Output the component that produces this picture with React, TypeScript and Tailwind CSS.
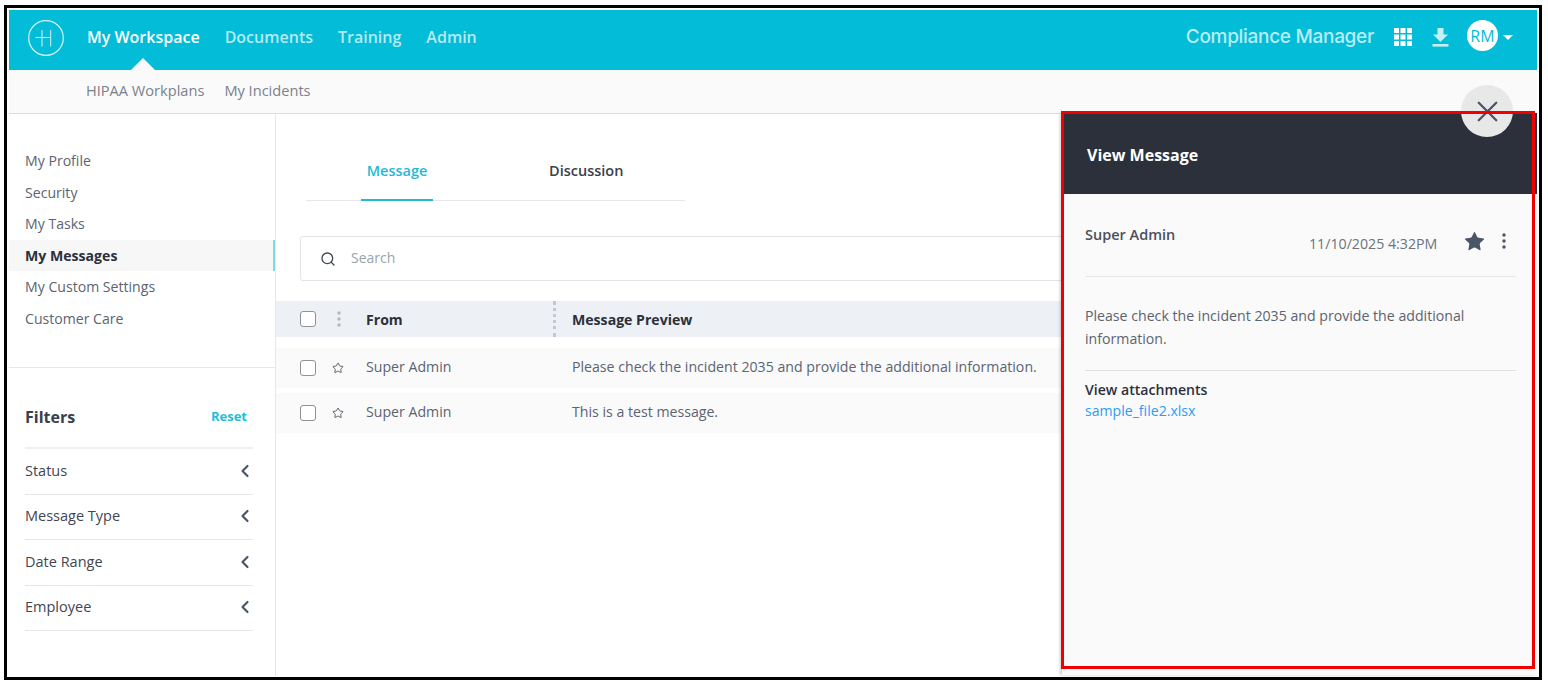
import React from 'react';
import { ChevronLeft, Search, Star, X } from 'lucide-react';

const sideLinks = ['My Profile', 'Security', 'My Tasks', 'My Messages', 'My Custom Settings', 'Customer Care'];
const filters = ['Status', 'Message Type', 'Date Range', 'Employee'];

const Logo: React.FC = () => (
  <svg width="36" height="36" viewBox="0 0 36 36" fill="none" stroke="#d5f3f8">
    <circle cx="18" cy="18" r="17.3" strokeWidth="1.2" />
    <path d="M7.5 17.5h15M14 10v16.5M22.7 10v16.5" strokeWidth="1" />
  </svg>
);

const GridIcon: React.FC = () => (
  <svg width="18" height="18" viewBox="0 0 18 18" fill="#ffffff">
    {[0, 6.5, 13].map((y) =>
      [0, 6.5, 13].map((x) => <rect key={`${x}-${y}`} x={x} y={y} width="5" height="5" />),
    )}
  </svg>
);

const DownloadIcon: React.FC = () => (
  <svg width="17" height="19" viewBox="0 0 17 19" fill="#c4f0f6">
    <path d="M5.5 0h6v6.5h4.5L8.5 14 1 6.5h4.5z" />
    <rect x="0.5" y="16" width="16" height="2.6" />
  </svg>
);

const KebabIcon: React.FC<{ color: string }> = ({ color }) => (
  <svg width="4" height="16" viewBox="0 0 4 16" fill={color}>
    <circle cx="2" cy="2" r="1.7" />
    <circle cx="2" cy="8" r="1.7" />
    <circle cx="2" cy="14" r="1.7" />
  </svg>
);

const Checkbox: React.FC = () => (
  <span className="block w-4 h-4 rounded-[3px] border border-[#8f9296] bg-white" />
);

const MessageRow: React.FC<{ from: string; preview: string; medium?: boolean }> = ({ from, preview, medium }) => (
  <div className={`flex items-center h-10 bg-[#fafafa] text-[14.15px] text-[#5b6472] pb-[1px] ${medium ? 'font-medium' : ''}`}>
    <div className="w-[55px] pl-6 shrink-0"><Checkbox /></div>
    <div className="w-[35px] pl-[1px] shrink-0"><Star size={12} strokeWidth={1.8} className="text-[#4a5160]" /></div>
    <div className="w-[206px] pb-[2px] shrink-0">{from}</div>
    <div className="pb-[2px] whitespace-nowrap">{preview}</div>
  </div>
);

export default function App() {
  return (
    <div className="pt-[5px] pl-1 font-['Open_Sans',sans-serif]">
      <div className="relative w-[1538px] h-[675px] border-[3px] border-black p-[2px] bg-white overflow-hidden">
        <header className="flex items-center h-[60px] bg-[#03bcd7] pl-[19px] pr-[24px]">
          <span className="-mt-[4px]"><Logo /></span>
          <nav className="flex items-center gap-[25px] ml-[23px] text-[16px] font-semibold text-[#b4ebf3]">
            <a className="relative flex items-center h-[60px] pb-[6px] text-white">
              My Workspace
              <span className="absolute left-[44px] bottom-0 w-0 h-0 border-x-[12px] border-x-transparent border-b-[12px] border-b-[#fafafa]" />
            </a>
            <a className="pb-[6px]">Documents</a>
            <a className="pb-[6px]">Training</a>
            <a className="pb-[6px]">Admin</a>
          </nav>
          <div className="ml-auto flex items-center -mt-[6px]">
            <span className="font-['Inter',sans-serif] font-medium text-[19px] tracking-[-0.3px] text-[#b9edf5]">Compliance Manager</span>
            <span className="ml-5"><GridIcon /></span>
            <span className="ml-5"><DownloadIcon /></span>
            <span className="ml-[18px] flex items-center justify-center w-[31px] h-[31px] -mt-[3px] rounded-full bg-white text-[#03bcd7] text-[16px]">RM</span>
            <span className="ml-[5px] mt-[1px] w-0 h-0 border-x-[5px] border-x-transparent border-t-[5px] border-t-white" />
          </div>
        </header>

        <div className="flex items-center gap-5 h-[44px] pl-[77px] pb-[1px] bg-[#fafafa] border-b border-[#dcdcdc] text-[14.6px] font-medium text-[#7b818b]">
          <a>HIPAA Workplans</a>
          <a>My Incidents</a>
        </div>

        <div className="flex h-[562px]">
          <aside className="w-[267px] shrink-0 border-r border-[#e8e8e8]">
            <ul className="pt-[31px] h-[254px] border-b border-[#e8e8e8] text-[14.1px] text-[#5c6470]">
              {sideLinks.map((link) => (
                <li
                  key={link}
                  className={`h-[31.5px] pl-4 flex items-center ${link === 'My Messages' ? 'bg-[#f7f7f7] font-bold text-[#2b303b] border-r-2 border-[#7fd9e8]' : ''}`}
                >
                  {link}
                </li>
              ))}
            </ul>
            <div className="pl-4 pr-[22px]">
              <div className="flex items-center justify-between h-[81px] border-b-2 border-[#efefef] pr-[6px] pt-[19px]">
                <span className="text-[16px] font-bold text-[#3a404b]">Filters</span>
                <span className="text-[13px] font-bold text-[#1cc0d8]">Reset</span>
              </div>
              {filters.map((filter) => (
                <div key={filter} className="flex items-center justify-between h-[45.5px] pb-[1px] border-b border-[#e6e6e6] text-[14.5px] font-medium text-[#3f4653]">
                  {filter}
                  <ChevronLeft size={20} strokeWidth={2.6} className="text-[#4a5568] -mr-[1.5px]" />
                </div>
              ))}
            </div>
          </aside>

          <main className="flex-1 min-w-0">
            <div className="ml-[30px] flex w-[379px] h-[87px] border-b border-[#e3e6ea] text-[14.5px] font-semibold">
              <div className="ml-[55px] w-[72px] pt-[46px] text-center text-[#25b9d3] border-b-2 border-[#25b9d3] h-[87px]">Message</div>
              <div className="ml-[116px] pt-[46px] text-[#3a404b]">Discussion</div>
            </div>
            <div className="flex items-center ml-6 mt-[35px] mr-4 h-[45px] border border-[#e2e4e8] rounded-[3px] pl-[19px] text-sm text-[#9aa3b0]">
              <Search size={16} strokeWidth={2} className="text-[#3f4653]" />
              <span className="ml-[15px] pb-[2px]">Search</span>
            </div>
            <div className="flex items-center h-9 mt-5 bg-[#edf0f5] text-[14.1px] font-bold text-[#2b303b]">
              <div className="w-[55px] pl-6 pb-[1px] shrink-0"><Checkbox /></div>
              <div className="w-[35px] shrink-0 pl-[6px]"><KebabIcon color="#b5b8bd" /></div>
              <div className="w-[206px] shrink-0 relative h-9 flex items-center pt-[2px]">
                From
                <span className="absolute right-[16px] top-0 h-9 border-r-[3px] border-dotted border-[#c3c9d2]" />
              </div>
              <div className="pt-[2px]">Message Preview</div>
            </div>
            <div className="mt-[11px] flex flex-col gap-[5px]">
              <MessageRow from="Super Admin" preview="Please check the incident 2035 and provide the additional information." />
              <MessageRow from="Super Admin" preview="This is a test message." medium />
            </div>
          </main>
        </div>

        <section className="absolute left-[1055px] top-[105px] w-[475px] h-[562px] bg-[#fafafa] shadow-[-2px_0_3px_rgba(0,0,0,0.2)]">
          <div className="flex items-center h-[81px] pl-[25px] pt-[2px] bg-[#2b303b] text-[16px] font-bold text-white">View Message</div>
          <div className="pl-[23px] pr-[21px]">
            <div className="relative h-[83px] border-b border-[#e8e8e8]">
              <span className="absolute left-0 top-[30px] text-[14.5px] font-semibold text-[#4a515e]">Super Admin</span>
              <span className="absolute left-[224px] top-[39px] text-[14.2px] text-[#6b7280]">11/10/2025 4:32PM</span>
              <Star size={23} fill="#4a5568" strokeWidth={0} className="absolute left-[378px] top-[36px]" />
              <span className="absolute left-[417px] top-[39px]"><KebabIcon color="#4a5568" /></span>
            </div>
            <p className="h-[94px] pt-[27px] border-b border-[#e0e0e0] text-[14.15px] leading-[23px] text-[#5c6470]">
              Please check the incident 2035 and provide the additional information.
            </p>
            <div className="pt-[8px] text-[14.1px] font-semibold text-[#2b303b]">View attachments</div>
            <a className="block mt-[1px] text-[14.1px] text-[#2c9cf5] leading-[20px]">sample_file2.xlsx</a>
          </div>
        </section>

        <button className="absolute left-[1454px] top-[77px] w-[52px] h-[52px] rounded-full bg-[#e8e8e8] flex items-center justify-center text-[#4a5568]">
          <X size={35} strokeWidth={1.6} />
        </button>

        <div className="absolute left-[1054px] top-[103px] w-[474px] h-[558px] border-[3px] border-[#f00000]" />
      </div>
    </div>
  );
}
